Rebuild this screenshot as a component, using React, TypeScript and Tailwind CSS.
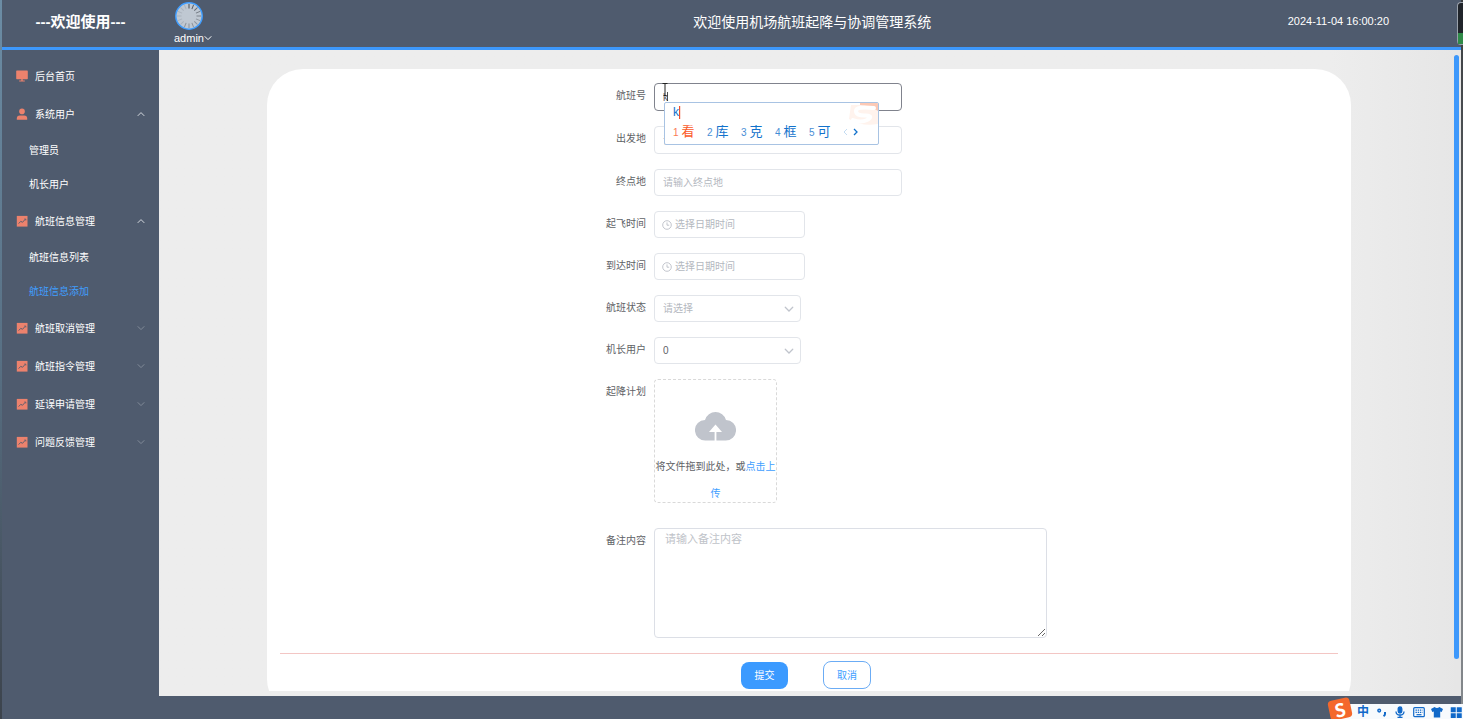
import React from 'react';

type MenuEntry = {
  label: string;
  icon: 'monitor' | 'user' | 'chart';
  arrow?: 'up' | 'down';
  children?: { label: string; active?: boolean }[];
};

const menu: MenuEntry[] = [
  { label: '后台首页', icon: 'monitor' },
  {
    label: '系统用户',
    icon: 'user',
    arrow: 'up',
    children: [{ label: '管理员' }, { label: '机长用户' }]
  },
  {
    label: '航班信息管理',
    icon: 'chart',
    arrow: 'up',
    children: [{ label: '航班信息列表' }, { label: '航班信息添加', active: true }]
  },
  { label: '航班取消管理', icon: 'chart', arrow: 'down' },
  { label: '航班指令管理', icon: 'chart', arrow: 'down' },
  { label: '延误申请管理', icon: 'chart', arrow: 'down' },
  { label: '问题反馈管理', icon: 'chart', arrow: 'down' }
];

const candidates = ['看', '库', '克', '框', '可'];

const Chevron: React.FC<{ up?: boolean; className?: string }> = ({ up, className }) => (
  <svg viewBox="0 0 8 8" className={className} fill="none" stroke="currentColor" strokeLinecap="round">
    <path d={up ? 'M1 5.6 4 2.6l3 3' : 'M1 2.6l3 3 3-3'} />
  </svg>
);

const MenuIcon: React.FC<{ name: MenuEntry['icon'] }> = ({ name }) => (
  <svg viewBox="0 0 12 12" className="size-3 shrink-0 text-[#ec826d]" fill="currentColor">
    {name === 'monitor' && (
      <path d="M.8.6h10.4q.6 0 .6.6v7.4q0 .6-.6.6H6.7v1.2h2.1v1H3.2v-1h2.1V9.2H.8q-.6 0-.6-.6V1.2Q.2.6.8.6z" />
    )}
    {name === 'user' && (
      <>
        <circle cx="6" cy="3.4" r="2.8" />
        <path d="M.8 11.8V10.4q0-3 3-3h4.4q3 0 3 3v1.4z" />
      </>
    )}
    {name === 'chart' && (
      <>
        <path d="M.8.9h10.7v10.7H.8z" />
        <path d="M2.6 8.6l2.2-2.3 1.7 1 2.7-3" fill="none" stroke="#4f5b6e" strokeWidth=".9" />
        <path d="M8.3 4h1.5v1.5" fill="none" stroke="#4f5b6e" strokeWidth=".7" />
      </>
    )}
  </svg>
);

const Avatar: React.FC = () => (
  <svg viewBox="0 0 30 30" className="size-[30px]">
    <circle cx="15" cy="15" r="13.2" fill="#bfc8d2" stroke="#409eff" strokeWidth="1.5" />
    {Array.from({ length: 16 }, (_, i) => (
      <line
        key={i}
        x1="15"
        y1="3"
        x2="15"
        y2="7.5"
        stroke="#3b4048"
        strokeWidth="1"
        opacity={i < 5 ? 0.9 - i * 0.1 : i < 10 ? 0.4 : 0.15}
        transform={`rotate(${i * 22.5} 15 15)`}
      />
    ))}
  </svg>
);

const Clock: React.FC = () => (
  <svg viewBox="0 0 10 10" className="size-[10px] shrink-0" fill="none" stroke="#b4b8c0" strokeWidth=".8">
    <circle cx="5" cy="5" r="4.3" />
    <path d="M5 2.4V5.2H7.2" />
  </svg>
);

const Header: React.FC = () => (
  <header className="flex h-[50px] shrink-0 items-center border-b-[3px] border-[#3d98fb] bg-[#4f5b6e] text-white">
    <h1 className="w-[157px] shrink-0 pb-1 text-center text-[15px] leading-5 font-bold">---欢迎使用---</h1>
    <div className="flex h-full w-[178px] shrink-0 items-start pt-px pl-[15px]">
      <button type="button" className="flex flex-col items-start">
        <Avatar />
        <span className="flex items-center text-[11px] leading-[14px]">
          admin
          <Chevron className="size-2" />
        </span>
      </button>
    </div>
    <p className="flex-1 pb-1 text-center text-sm">欢迎使用机场航班起降与协调管理系统</p>
    <time className="mr-[72px] pb-1 text-[11px]">2024-11-04 16:00:20</time>
  </header>
);

const Sidebar: React.FC = () => (
  <nav className="w-[157px] shrink-0 bg-[#4f5b6e] pt-[7px] text-[10px] text-white">
    {menu.map((item) => (
      <div key={item.label}>
        <a href="#" className="flex h-[38px] items-center gap-[7px] pr-[14px] pl-[14px]">
          <MenuIcon name={item.icon} />
          <span className="flex-1">{item.label}</span>
          {item.arrow && (
            <Chevron
              up={item.arrow === 'up'}
              className={item.arrow === 'up' ? 'size-2 text-[#d5d9df]' : 'size-2 text-[#828b99]'}
            />
          )}
        </a>
        {item.children && (
          <div className="pb-px">
            {item.children.map((child) => (
              <a
                key={child.label}
                href="#"
                className={
                  child.active
                    ? 'flex h-[34px] items-center pl-[27px] text-[#409eff]'
                    : 'flex h-[34px] items-center pl-[27px]'
                }
              >
                {child.label}
              </a>
            ))}
          </div>
        )}
      </div>
    ))}
  </nav>
);

const Row: React.FC<{ label: string; id: string; children: React.ReactNode }> = ({ label, id, children }) => (
  <div className="grid grid-cols-[374fr_684fr]">
    <label htmlFor={id} className="pr-2 text-right leading-[26px] text-[#606266]">
      {label}
    </label>
    <div>{children}</div>
  </div>
);

const DateField: React.FC<{ id: string }> = ({ id }) => (
  <div className="flex h-[27px] w-[151px] items-center gap-[3px] rounded border border-[#e2e5ea] px-[7px]">
    <Clock />
    <input
      id={id}
      type="text"
      placeholder="选择日期时间"
      className="w-full min-w-0 outline-none placeholder:text-[#b4b8c0]"
    />
  </div>
);

const SelectField: React.FC<{ id: string; value: string; empty?: boolean }> = ({ id, value, empty }) => (
  <div className="relative w-[147px]">
    <select
      id={id}
      className={
        empty
          ? 'block h-[27px] w-full appearance-none rounded border border-[#e2e5ea] bg-white px-2 text-[#b4b8c0] outline-none'
          : 'block h-[27px] w-full appearance-none rounded border border-[#e2e5ea] bg-white px-2 text-[#606266] outline-none'
      }
    >
      <option>{value}</option>
    </select>
    <Chevron className="pointer-events-none absolute top-[9px] right-[7px] size-[10px] text-[#c0c4cc]" />
  </div>
);

const ImePopup: React.FC = () => (
  <div className="absolute top-[19px] left-[10px] z-10 h-[43px] w-[215px] overflow-hidden rounded-xs border border-[#a8c3e3] bg-white pl-2 text-[#1272cc]">
    <div className="flex h-[18px] items-center text-xs">
      k
      <svg viewBox="0 0 2 13" className="h-[13px] w-0.5 shrink-0">
        <path d="M0 0h1.2v13H0z" fill="#f0502f" />
      </svg>
    </div>
    <div className="flex h-[22px] items-center">
      <ol className="flex">
        {candidates.map((word, i) => (
          <li
            key={word}
            className={
              i === 0
                ? 'flex w-[34px] items-center gap-[3px] text-[13px] text-[#fb5a28]'
                : 'flex w-[34px] items-center gap-[3px] text-[13px]'
            }
          >
            <span className="text-[10px] opacity-80">{i + 1}</span>
            {word}
          </li>
        ))}
      </ol>
      <svg viewBox="0 0 16 8" className="h-2 w-4" fill="none" stroke="currentColor">
        <path d="M4 1 1 4l3 3" opacity=".25" />
        <path d="M11 1l3 3-3 3" strokeWidth="1.3" />
      </svg>
    </div>
    <svg viewBox="0 0 30 24" className="absolute top-0 right-0 h-6 w-[30px]" fill="none" strokeLinecap="round">
      <path d="M3 2h27v19Q14 24 1 16z" fill="#fff3ed" />
      <path d="M12 0h18v8Q22 3 12 2z" fill="#fcc9b5" />
      <path d="M26 5Q8 3 8 8t10 4.500Q26 13 19 17q-6 3-14 0" stroke="#fff" strokeWidth="4" />
    </svg>
  </div>
);

const FlightForm: React.FC = () => (
  <form className="text-[10px]">
    <div className="flex flex-col gap-[15px]">
      <Row label="航班号" id="flight-no">
        <div className="relative">
          <input
            id="flight-no"
            type="text"
            defaultValue="k"
            className="block h-7 w-[248px] rounded border border-[#80838d] px-2 text-[#606266] outline-none"
          />
          {/* mouse pointer over the typed text */}
          <svg viewBox="0 0 8 20" className="absolute top-0 left-[7px] h-5 w-2" fill="none" stroke="#222">
            <path d="M1.5 .5h5M4 .5v12M2.5 12.5h3" />
            <path d="M6.5 9v9" strokeWidth=".8" />
          </svg>
          <ImePopup />
        </div>
      </Row>
      <Row label="出发地" id="origin">
        <input
          id="origin"
          type="text"
          placeholder="请输入出发地"
          className="block h-7 w-[248px] rounded border border-[#e2e5ea] px-2 outline-none placeholder:text-[#b4b8c0]"
        />
      </Row>
      <Row label="终点地" id="destination">
        <input
          id="destination"
          type="text"
          placeholder="请输入终点地"
          className="block h-[27px] w-[248px] rounded border border-[#e2e5ea] px-2 outline-none placeholder:text-[#b4b8c0]"
        />
      </Row>
      <Row label="起飞时间" id="depart-at">
        <DateField id="depart-at" />
      </Row>
      <Row label="到达时间" id="arrive-at">
        <DateField id="arrive-at" />
      </Row>
      <Row label="航班状态" id="status">
        <SelectField id="status" value="请选择" empty />
      </Row>
      <Row label="机长用户" id="captain">
        <SelectField id="captain" value="0" />
      </Row>
      <Row label="起降计划" id="plan">
        <label
          htmlFor="plan"
          className="mb-[10px] flex h-[124px] w-[123px] cursor-pointer flex-col items-center overflow-hidden rounded border border-dashed border-[#d9d9d9] pt-[30px] text-center leading-[27px] text-[#606266]"
        >
          <svg viewBox="0 0 41 31" className="mb-3 h-[31px] w-[41px] shrink-0">
            <path
              d="M10.5 30.5A10.3 10.3 0 0 1 10 9.9 10.9 10.9 0 0 1 31 9.9 10.3 10.3 0 0 1 30.5 30.5H21.4V22H27L20.5 14.5 14 22h5.6v8.5z"
              fill="#c0c4cc"
            />
          </svg>
          <span>
            将文件拖到此处，或<em className="text-[#409eff] not-italic">点击上传</em>
          </span>
          <input id="plan" type="file" className="sr-only" />
        </label>
      </Row>
      <Row label="备注内容" id="remark">
        <textarea
          id="remark"
          placeholder="请输入备注内容"
          className="block h-[110px] w-[393px] rounded-sm border border-[#dcdfe6] px-[10px] py-[2px] text-[11px] outline-none placeholder:text-[#c0c3c9]"
        />
      </Row>
    </div>
    <hr className="mt-[15px] border-[#f3c6c4]" />
    <div className="flex items-center justify-center gap-[35px] pt-[7px] pr-[6px] pb-[26px]">
      <button type="submit" className="h-[27px] w-[47px] rounded-lg bg-[#3b9aff] text-white">
        提交
      </button>
      <button type="button" className="h-7 w-12 rounded-lg border border-[#6bacf5] bg-white text-[#409eff]">
        取消
      </button>
    </div>
  </form>
);

const ImeBar: React.FC = () => (
  <div className="absolute right-0 bottom-0 flex h-[20px] w-[134px] items-end text-[#1169c9]">
    <span className="z-10 flex h-5 w-[22px] shrink-0 -rotate-12 items-center justify-center rounded-sm bg-[#f4682c] font-[Lato] text-[19px] leading-none font-black text-white">
      S
    </span>
    <div className="-ml-3 flex h-[15px] flex-1 items-center justify-between bg-[#f7fafd] pr-px pl-[18px]">
      <span className="text-xs leading-none font-bold">中</span>
      <svg viewBox="0 0 12 12" className="size-3" fill="none" stroke="currentColor" strokeWidth="1.5">
        <circle cx="3.2" cy="4.6" r="1.3" />
        <path d="M9 6v2q0 1.200-1.500 2.200" strokeWidth="2" />
      </svg>
      <svg viewBox="0 0 12 12" className="size-3" fill="none" stroke="currentColor" strokeWidth="1.3">
        <rect x="4.2" y="1" width="3.6" height="6" rx="1.8" fill="currentColor" />
        <path d="M2 5.5q0 3.5 4 3.5t4-3.5M6 9v2M3.5 11.3h5" />
      </svg>
      <svg viewBox="0 0 12 12" className="size-3" fill="none" stroke="currentColor" strokeWidth="1.2">
        <rect x=".7" y="1.7" width="10.6" height="9" rx="1" />
        <path d="M2.5 4.2h7M2.5 6.4h7" strokeDasharray="1.4 .8" />
        <path d="M3.5 8.7h5" />
      </svg>
      <svg viewBox="0 0 12 12" className="size-3" fill="currentColor">
        <path d="M3.6 1q2.4 2 4.8 0L12 3l-1.3 3-1.5-.6V11.5H2.8V5.4L1.3 6 0 3z" />
      </svg>
      <svg viewBox="0 0 12 12" className="size-3" fill="none" stroke="currentColor" strokeWidth="1.5">
        <path d="M1.500 2h3.500v3.500H1.500zM7.500 2H11v3.500H7.500zM1.500 8h3.500v3.500H1.500zM7.500 8H11v3.500H7.500z" fill="currentColor" />
      </svg>
    </div>
  </div>
);

const App: React.FC = () => {
  return (
    <div className="relative flex h-screen overflow-hidden bg-[#4f5b6e] font-['Liberation_Sans','Noto_Sans_CJK_SC',sans-serif]">
      {/* desktop showing at both sides of the window */}
      <div className="w-0.5 shrink-0 bg-linear-to-b from-[#6c8da5] via-[#587084] to-[#3c434c]" />
      <div className="flex min-w-0 flex-1 flex-col">
        <Header />
        <div className="flex min-h-0 flex-1">
          <Sidebar />
          <main className="flex min-w-0 flex-1 bg-linear-to-r from-[#ededed] from-90% to-[#e6e6e6] pb-[5px]">
            <div className="min-w-0 flex-1 overflow-hidden pt-[19px] pr-[103px] pl-27">
              <section className="rounded-[36px] bg-white px-[13px] pt-[14px]">
                <FlightForm />
              </section>
            </div>
            <div className="w-[7px] shrink-0 bg-[#e6e6e6] pt-[5px]">
              <div className="h-[95%] w-[5px] rounded-full bg-[#3d98fb]" />
            </div>
          </main>
        </div>
        <footer className="h-[23px] shrink-0 bg-[#4f5b6e]" />
      </div>
      <div className="w-0.5 shrink-0 bg-linear-to-b from-[#3a3d40] via-[#6b7075] to-[#85898d]" />
      <div className="absolute top-0.5 right-0 flex h-[43px] w-[6px] flex-col justify-end rounded-l border border-r-0 border-[#9aa1ab] bg-[#20242a]">
        <div className="h-[11px] bg-[#2f8a48]" />
      </div>
      <ImeBar />
    </div>
  );
};

export default App;
